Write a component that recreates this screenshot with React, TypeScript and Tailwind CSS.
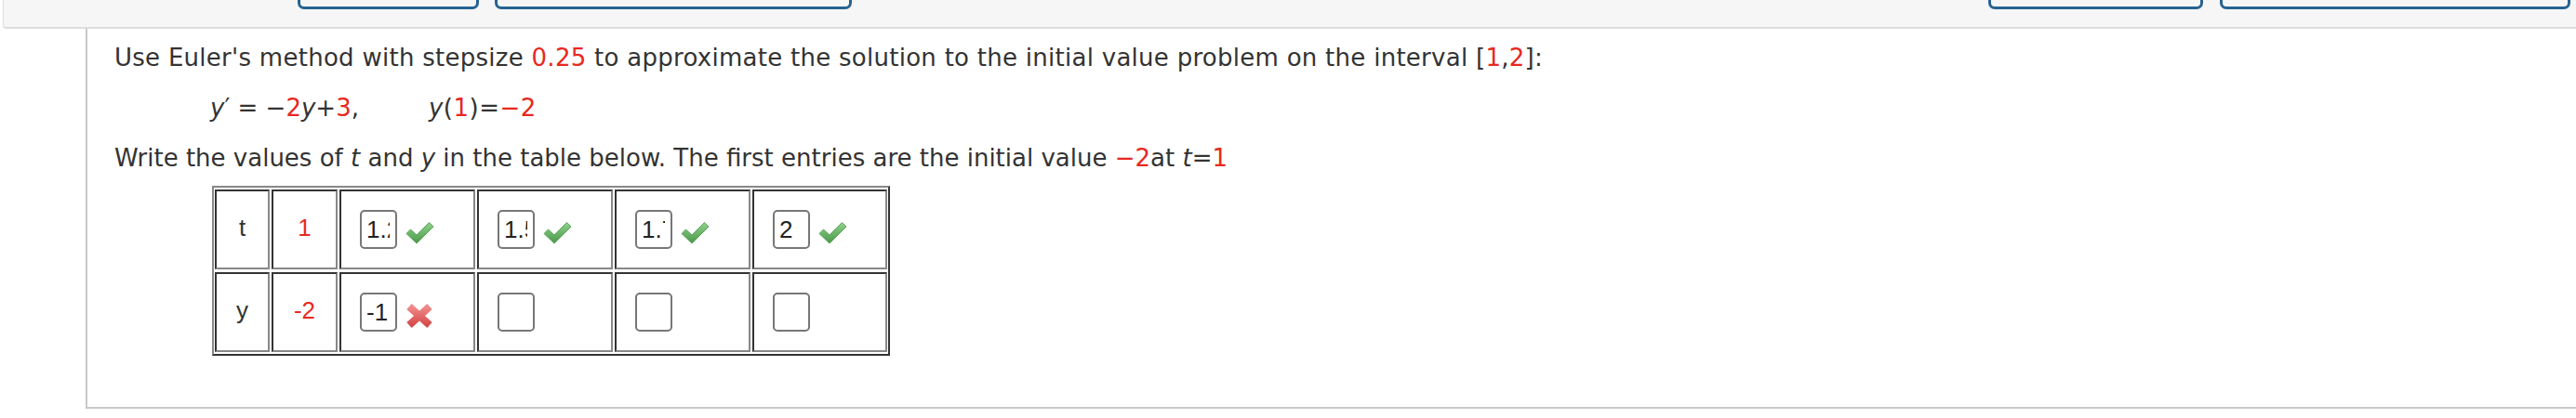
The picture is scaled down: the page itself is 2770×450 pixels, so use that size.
import React from 'react';

// =============================================================================
// SMALL PIECES
// =============================================================================

const Red = ({ children }: { children: React.ReactNode }) => (
  <span className="text-[#e8281f]">{children}</span>
);

const I = ({ children }: { children: React.ReactNode }) => <span className="italic">{children}</span>;

function CheckMark() {
  return (
    <svg width="31" height="25" viewBox="0 0 31 25" className="mt-[7px] shrink-0">
      <defs>
        <linearGradient id="chk" x1="0" y1="0" x2="0" y2="1">
          <stop offset="0" stopColor="#8fd18b" />
          <stop offset="1" stopColor="#4b994b" />
        </linearGradient>
      </defs>
      <path
        d="M1 13.5 L5.5 9 L12 15 L25.5 1.5 L30 6 L12 24 Z"
        fill="url(#chk)"
        stroke="#5aa55a"
        strokeWidth="1"
        strokeLinejoin="round"
      />
    </svg>
  );
}

function CrossMark() {
  return (
    <svg width="30" height="26" viewBox="0 0 30 26" className="mt-[7px] shrink-0">
      <defs>
        <linearGradient id="crs" x1="0" y1="0" x2="0" y2="1">
          <stop offset="0" stopColor="#f08a8a" />
          <stop offset="1" stopColor="#d74a4a" />
        </linearGradient>
      </defs>
      <path d="M4 3 L26 23 M26 3 L4 23" stroke="url(#crs)" strokeWidth="8" strokeLinecap="butt" />
    </svg>
  );
}

// input box: the value scrolls out of a narrow field, as in the screenshot
function AnswerBox({ value }: { value?: string }) {
  return (
    <div className="w-[40px] h-[42px] shrink-0 border-2 border-[#777] rounded-[5px] bg-white flex items-center pl-[5px]">
      <span className="block w-[25px] overflow-hidden whitespace-nowrap text-[26px] leading-[30px] text-[#222]">
        {value}
      </span>
    </div>
  );
}

const cellCls =
  "h-[86px] border-2 border-t-[#333] border-l-[#333] border-b-[#888] border-r-[#888] bg-white";

function LabelCell({ children }: { children: React.ReactNode }) {
  return <div className={`${cellCls} flex items-center justify-center pb-[4px] text-[26px]`}>{children}</div>;
}

function InputCell({ value, mark }: { value?: string; mark?: 'ok' | 'bad' }) {
  return (
    <div className={`${cellCls} flex items-center pl-[20px] gap-[9px]`}>
      <AnswerBox value={value} />
      {mark === 'ok' && <CheckMark />}
      {mark === 'bad' && <CrossMark />}
    </div>
  );
}

const navBtn = "h-[10px] border-x-[3px] border-b-[3px] border-[#276391] rounded-b-[7px]";

// =============================================================================
// PAGE
// =============================================================================

export default function App() {
  return (
    <div className="w-[2770px] h-[450px] bg-white overflow-hidden font-['DejaVu_Sans',sans-serif] text-[#333]">
      {/* Top toolbar (buttons cut off by the top edge) */}
      <div className="ml-[3px] h-[31px] bg-[#f6f6f6] border-l border-b-2 border-[#dddddd] rounded-bl-[4px] flex justify-between pl-[316px] pr-[6px]">
        <div className="flex gap-[17px]">
          <div className={`${navBtn} w-[195px]`} />
          <div className={`${navBtn} w-[384px]`} />
        </div>
        <div className="flex gap-[18px]">
          <div className={`${navBtn} w-[231px]`} />
          <div className={`${navBtn} w-[377px]`} />
        </div>
      </div>

      {/* Question body */}
      <div className="ml-[92px] border-l-2 border-b-2 border-[#c8c8c8] pl-[29px] pt-[16px] pb-[55px] text-[26px] leading-[30px]">
        <p className="whitespace-nowrap tracking-[0.27px]">
          Use Euler's method with stepsize <Red>0.25</Red> to approximate the solution to the initial value
          problem on the interval [<Red>1</Red>,<Red>2</Red>]:
        </p>

        <p className="mt-[24px] pl-[103px] whitespace-nowrap">
          <I>y</I>′ = −<Red>2</Red>
          <I>y</I>+<Red>3</Red>,
          <span className="ml-[75px] tracking-[0.5px]">
            <I>y</I>(<Red>1</Red>)=<Red>−2</Red>
          </span>
        </p>

        <p className="mt-[24px] whitespace-nowrap">
          Write the values of <I>t</I> and <I>y</I> in the table below. The first entries are the initial value{' '}
          <Red>−2</Red>at <I>t</I>=<Red>1</Red>
        </p>

        {/* Euler table */}
        <div className="mt-[15px] ml-[105px] inline-block border-2 border-t-[#888] border-l-[#888] border-b-[#333] border-r-[#333] px-[1px] py-[2px] font-['Liberation_Sans',Arial,sans-serif]">
          <div className="grid grid-cols-[59px_71px_146px_146px_146px_145px] gap-x-[2px] gap-y-[3px]">
            <LabelCell>t</LabelCell>
            <LabelCell>
              <Red>1</Red>
            </LabelCell>
            <InputCell value="1.25" mark="ok" />
            <InputCell value="1.5" mark="ok" />
            <InputCell value="1.75" mark="ok" />
            <InputCell value="2" mark="ok" />

            <LabelCell>y</LabelCell>
            <LabelCell>
              <Red>-2</Red>
            </LabelCell>
            <InputCell value="-1" mark="bad" />
            <InputCell />
            <InputCell />
            <InputCell />
          </div>
        </div>
      </div>
    </div>
  );
}
